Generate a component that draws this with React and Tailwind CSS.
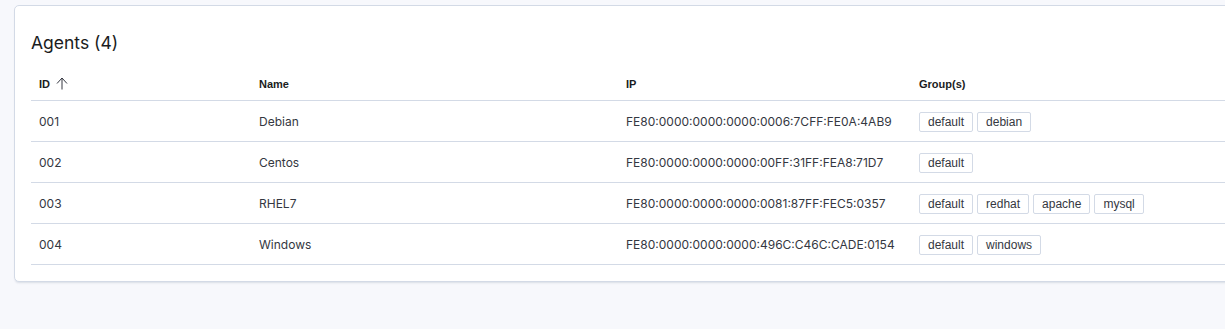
const agents = [
  { id: "001", name: "Debian", ip: "FE80:0000:0000:0000:0006:7CFF:FE0A:4AB9", groups: ["default", "debian"] },
  { id: "002", name: "Centos", ip: "FE80:0000:0000:0000:00FF:31FF:FEA8:71D7", groups: ["default"] },
  { id: "003", name: "RHEL7", ip: "FE80:0000:0000:0000:0081:87FF:FEC5:0357", groups: ["default", "redhat", "apache", "mysql"] },
  { id: "004", name: "Windows", ip: "FE80:0000:0000:0000:496C:C46C:CADE:0154", groups: ["default", "windows"] },
];

const inter = "font-['Inter',sans-serif]";
const arial = "font-['Liberation_Sans',Arial,sans-serif]";

function SortUp() {
  return (
    <svg width="12" height="13" viewBox="0 0 12 13" fill="none" className="ml-[6px] text-[#343741]">
      <path d="M1 6.5 L6 1 L11 6.5 M6 1 V12.5" stroke="currentColor" strokeWidth="1" />
    </svg>
  );
}

export default function App() {
  return (
    <div className="min-h-[329px] w-[1225px] overflow-hidden bg-[#f7f8fc] pt-[5px] pl-[14px]">
      {/* Card */}
      <div className="w-[1260px] rounded-[5px] border border-[#d3dae6] bg-white px-4 pt-[25px] pb-4 shadow-[0_2px_2px_-1px_rgba(152,162,179,0.3)]">
        <h2 className={`${inter} text-[17.5px] leading-6 text-[#1a1c21]`}>Agents (4)</h2>

        {/* Table */}
        <table className="mt-[13px] w-full table-fixed border-collapse">
          <thead>
            <tr className="border-b border-[#d3dae6]">
              <th className={`${arial} w-[220px] h-[32px] px-2 text-left text-[11px] font-bold text-[#1a1c21]`}>
                <span className="inline-flex items-center">ID<SortUp /></span>
              </th>
              <th className={`${arial} w-[367px] px-2 text-left text-[11px] font-bold text-[#1a1c21]`}>Name</th>
              <th className={`${arial} w-[293px] px-2 text-left text-[11px] font-bold text-[#1a1c21]`}>IP</th>
              <th className={`${arial} px-2 text-left text-[11px] font-bold text-[#1a1c21]`}>Group(s)</th>
            </tr>
          </thead>
          <tbody>
            {agents.map((a) => (
              <tr key={a.id} className="h-[41px] border-b border-[#d3dae6]">
                <td className={`${inter} px-2 pt-[2px] text-[12px] text-[#343741]`}>{a.id}</td>
                <td className={`${inter} px-2 pt-[2px] text-[12px] text-[#343741]`}>{a.name}</td>
                <td className={`${inter} px-2 pt-[2px] text-[12px] text-[#343741]`}>{a.ip}</td>
                <td className="px-2 pt-[2px]">
                  <div className="flex gap-1">
                    {a.groups.map((g) => (
                      <span
                        key={g}
                        className={`${arial} inline-flex h-[20px] items-center rounded-[2px] border border-[#d3dae6] bg-white px-2 text-[12px] text-[#343741]`}
                      >
                        {g}
                      </span>
                    ))}
                  </div>
                </td>
              </tr>
            ))}
          </tbody>
        </table>
      </div>
    </div>
  );
}
